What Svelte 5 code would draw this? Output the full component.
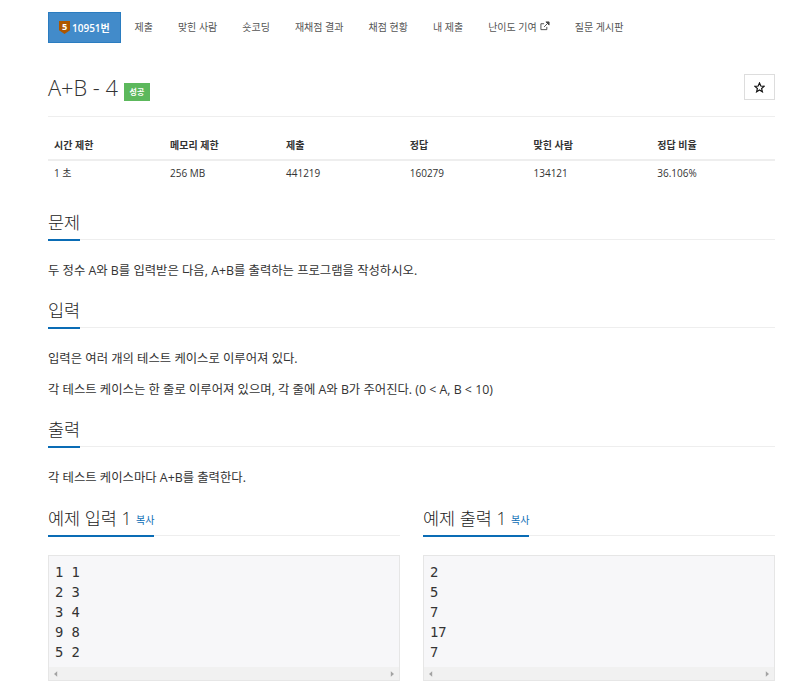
<script lang="ts">
  const navItems = ['제출', '맞힌 사람', '숏코딩', '재채점 결과', '채점 현황', '내 제출', '난이도 기여', '질문 게시판'];
  const headers = ['시간 제한', '메모리 제한', '제출', '정답', '맞힌 사람', '정답 비율'];
  const stats = ['1 초', '256 MB', '441219', '160279', '134121', '36.106%'];
  const samples = [
    { title: '예제 입력 1', text: '1 1\n2 3\n3 4\n9 8\n5 2' },
    { title: '예제 출력 1', text: '2\n5\n7\n17\n7' },
  ];
</script>

<div class="page">
  <nav class="nav">
    <span class="tab active">
      <svg class="tier" viewBox="0 0 12 14" width="11" height="13">
        <path d="M0 0H12V10L6 14L0 10Z" fill="#ad5600" />
        <text x="6" y="10" text-anchor="middle" class="tier-num">5</text>
      </svg>10951번
    </span>
    {#each navItems as item}
      <span class="tab">
        {item}
        {#if item === '난이도 기여'}
          <svg class="ext" viewBox="0 0 11 11" width="10" height="10">
            <path d="M7.5 6.5V9.5H1V3H4.5" fill="none" stroke="#444" stroke-width="1" />
            <path d="M4.5 6.5L9 2M6.5 1H10V4.5Z" fill="#444" stroke="#444" stroke-width="1" />
          </svg>
        {/if}
      </span>
    {/each}
  </nav>

  <header class="page-header">
    <h1>A+B - 4</h1>
    <span class="label">성공</span>
    <button class="star" aria-label="star">
      <svg viewBox="0 0 14 14" width="11" height="11">
        <path d="M7 1.2L8.7 5.1L12.9 5.5L9.7 8.3L10.7 12.5L7 10.2L3.3 12.5L4.3 8.3L1.1 5.5L5.3 5.1Z" fill="none" stroke="#111" stroke-width="1.5" />
      </svg>
    </button>
  </header>

  <table class="info">
    <thead>
      <tr>{#each headers as h}<th>{h}</th>{/each}</tr>
    </thead>
    <tbody>
      <tr>{#each stats as s}<td>{s}</td>{/each}</tr>
    </tbody>
  </table>

  <section class="first">
    <div class="headline"><h2>문제</h2></div>
    <p>두 정수 A와 B를 입력받은 다음, A+B를 출력하는 프로그램을 작성하시오.</p>
  </section>

  <section>
    <div class="headline"><h2>입력</h2></div>
    <p>입력은 여러 개의 테스트 케이스로 이루어져 있다.</p>
    <p>각 테스트 케이스는 한 줄로 이루어져 있으며, 각 줄에 A와 B가 주어진다. (0 &lt; A, B &lt; 10)</p>
  </section>

  <section>
    <div class="headline"><h2>출력</h2></div>
    <p>각 테스트 케이스마다 A+B를 출력한다.</p>
  </section>

  <div class="samples">
    {#each samples as sample}
      <div class="sample">
        <div class="headline"><h2>{sample.title} <a href="#copy" class="copy">복사</a></h2></div>
        <div class="code">
          <pre>{sample.text}</pre>
          <div class="scrollbar">
            <svg viewBox="0 0 5 7" width="4" height="6"><path d="M4 0V7L0 3.5Z" fill="#a3a3a3" /></svg>
            <svg viewBox="0 0 5 7" width="4" height="6"><path d="M1 0V7L5 3.5Z" fill="#a3a3a3" /></svg>
          </div>
        </div>
      </div>
    {/each}
  </div>
</div>

<style>
  :global(body) {
    background: #fff;
    overflow: hidden;
  }

  .page {
    width: 727px;
    margin-left: 48px;
    font-family: 'Open Sans', 'Noto Sans CJK KR', sans-serif;
    font-size: 12px;
    color: #333;
  }

  .nav {
    display: flex;
    padding-top: 12px;
    height: 31px;
    font-size: 10px;
    color: #555;
  }

  .tab {
    display: flex;
    align-items: center;
    gap: 2px;
    padding: 0 12.5px 2px;
    white-space: nowrap;
  }

  .tab.active {
    width: 73px;
    box-sizing: border-box;
    padding: 0 0 1px 10px;
    margin-right: 1px;
    background: #428bca;
    border: 1px solid #2a7cc0;
    color: #fff;
    font-weight: 600;
    font-size: 10px;
    gap: 2px;
  }

  .tier-num {
    font-size: 10px;
    font-weight: 700;
    fill: #fff;
  }

  .ext {
    margin-left: 1px;
    margin-top: -2px;
  }

  .page-header {
    display: flex;
    align-items: flex-end;
    margin-top: 30px;
    height: 43px;
    border-bottom: 1px solid #eee;
  }

  h1 {
    margin: 0 0 13px;
    font-size: 21.8px;
    font-weight: 300;
    line-height: 30px;
    color: #333;
  }

  .label {
    margin: 0 0 15px 6px;
    width: 26px;
    height: 18px;
    line-height: 18px;
    text-align: center;
    background: #5cb85c;
    color: #fff;
    font-size: 8px;
    font-weight: 600;
  }

  .star {
    margin: 0 0 16px auto;
    width: 31px;
    height: 26px;
    padding: 0;
    display: flex;
    align-items: center;
    justify-content: center;
    background: #fff;
    border: 1px solid #ddd;
    border-radius: 0;
  }

  .info {
    width: 100%;
    margin-top: 16px;
    border-collapse: collapse;
    table-layout: fixed;
    font-size: 10px;
  }

  .info th:nth-child(-n+2) {
    width: 104px;
  }

  .info th {
    height: 23px;
    padding: 0 6px 3px;
    text-align: left;
    font-weight: 700;
    border-bottom: 2px solid #eee;
    color: #333;
  }

  .info td {
    height: 23px;
    padding: 0 6px 8px;
  }

  .headline {
    height: 35px;
    border-bottom: 1px solid #eee;
    box-sizing: border-box;
  }

  .first {
    margin-top: 13px;
  }

  h2 {
    display: inline-block;
    margin: 0;
    height: 36px;
    box-sizing: border-box;
    padding-top: 4px;
    font-size: 17.5px;
    font-weight: 300;
    line-height: 26px;
    border-bottom: 2px solid #0a6cb5;
    color: #222;
  }

  p {
    margin: 0 0 13px;
    font-size: 12.35px;
    line-height: 18px;
    color: #333;
  }

  .headline + p {
    margin-top: 22px;
  }

  .samples {
    display: flex;
    gap: 23px;
    margin-top: 14px;
  }

  .sample {
    flex: 1 1 0;
    min-width: 0;
  }

  .copy {
    font-size: 10px;
    font-weight: 400;
    color: #0a6cb5;
    text-decoration: none;
    vertical-align: 1px;
  }

  .code {
    margin-top: 19px;
    border: 1px solid #e6e6e6;
    background: #f7f7f9;
  }

  pre {
    margin: 0;
    padding: 6px 6px 5px;
    font-family: 'DejaVu Sans Mono', monospace;
    font-size: 13.8px;
    line-height: 20px;
    color: #333;
  }

  .scrollbar {
    display: flex;
    justify-content: space-between;
    align-items: center;
    height: 13px;
    padding: 0 5px;
    background: #f1f1f1;
  }
</style>
